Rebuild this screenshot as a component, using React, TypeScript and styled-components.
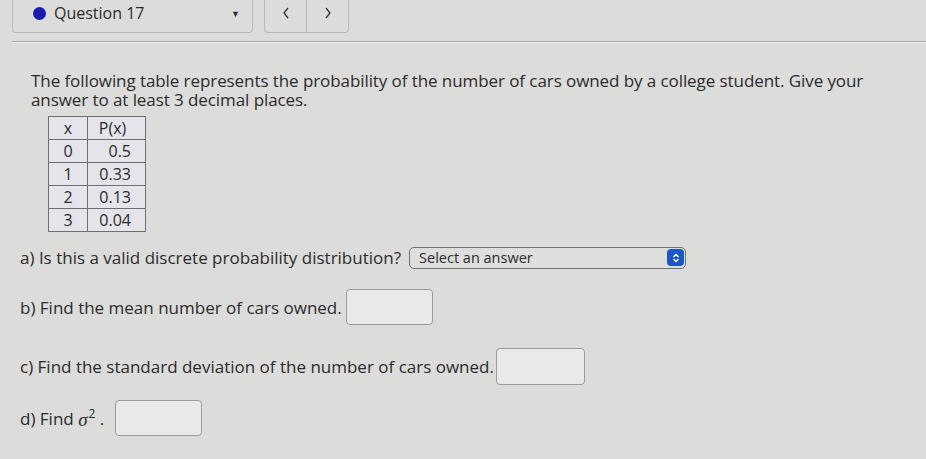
import styled, { createGlobalStyle } from 'styled-components';

const rows = [
  { x: '0', p: '0.5' },
  { x: '1', p: '0.33' },
  { x: '2', p: '0.13' },
  { x: '3', p: '0.04' },
];

const GlobalStyle = createGlobalStyle`
  html, body {
    margin: 0;
    padding: 0;
    background: #dcdcdb;
  }
  body {
    font-family: 'Open Sans', 'Liberation Sans', Arial, sans-serif;
    font-weight: 500;
    color: #2b2b2d;
    width: 926px;
    height: 459px;
    overflow: hidden;
  }
`;

export default function App() {
  return (
    <>
      <GlobalStyle />
      <Page>
        <TopBar>
          <QuestionPicker>
            <Dot />
            <QuestionLabel>Question 17</QuestionLabel>
            <Caret>▼</Caret>
          </QuestionPicker>
          <NavGroup>
            <NavButton>
              <Chevron viewBox="0 0 10 14">
                <path d="M7 2 L3 7 L7 12" />
              </Chevron>
            </NavButton>
            <NavButton>
              <Chevron viewBox="0 0 10 14">
                <path d="M3 2 L7 7 L3 12" />
              </Chevron>
            </NavButton>
          </NavGroup>
        </TopBar>
        <Rule />
        <Content>
          <Intro>
            The following table represents the probability of the number of cars owned by a college student. Give your
            answer to at least 3 decimal places.
          </Intro>
          <Table>
            <thead>
              <tr>
                <Cell>x</Cell>
                <Cell $align="center">P(x)</Cell>
              </tr>
            </thead>
            <tbody>
              {rows.map((r) => (
                <tr key={r.x}>
                  <Cell>{r.x}</Cell>
                  <Cell $align="right">{r.p}</Cell>
                </tr>
              ))}
            </tbody>
          </Table>
          <Part $top={14}>
            a) Is this a valid discrete probability distribution?
            <Select>
              <span>Select an answer</span>
              <SelectIcon>
                <svg width="8" height="10" viewBox="0 0 8 10">
                  <path d="M1.5 4 L4 1.5 L6.5 4" />
                  <path d="M1.5 6 L4 8.5 L6.5 6" />
                </svg>
              </SelectIcon>
            </Select>
          </Part>
          <Part $top={20} $gap={4}>
            b) Find the mean number of cars owned.
            <AnswerBox $width={87} $height={36} />
          </Part>
          <Part $top={23} $gap={2}>
            c) Find the standard deviation of the number of cars owned.
            <AnswerBox $width={89} $height={37} />
          </Part>
          <Part $top={15} $gap={11}>
            <span>
              d) Find <Sigma>σ<sup>2</sup></Sigma> .
            </span>
            <AnswerBox $width={87} $height={36} />
          </Part>
        </Content>
      </Page>
    </>
  );
}

const Page = styled.div`
  display: flex;
  flex-direction: column;
`;

const TopBar = styled.div`
  display: flex;
  gap: 11px;
  padding-left: 12px;
  height: 33px;
`;

const QuestionPicker = styled.div`
  width: 241px;
  display: flex;
  align-items: center;
  border: 1px solid #b9b9b9;
  border-top: none;
  border-radius: 0 0 4px 4px;
  padding: 0 0 6px 20px;
  box-sizing: border-box;
`;

const Dot = styled.span`
  width: 13px;
  height: 13px;
  border-radius: 50%;
  background: #1b1bb0;
  margin-right: 8px;
`;

const QuestionLabel = styled.span`
  font-size: 16px;
  flex: 1;
`;

const Caret = styled.span`
  font-size: 9px;
  color: #333;
  margin-right: 12px;
`;

const NavGroup = styled.div`
  display: flex;
  border: 1px solid #b9b9b9;
  border-top: none;
  border-radius: 0 0 4px 4px;
`;

const NavButton = styled.div`
  width: 41px;
  display: flex;
  align-items: center;
  justify-content: center;
  padding-bottom: 6px;
  & + & {
    border-left: 1px solid #b9b9b9;
  }
`;

const Chevron = styled.svg`
  width: 10px;
  height: 14px;
  fill: none;
  stroke: #333;
  stroke-width: 1.3;
`;

const Rule = styled.div`
  margin: 8px 0 0 12px;
  height: 1px;
  background: #a9a9a9;
  border-bottom: 1px solid #eaeaea;
`;

const Content = styled.div`
  padding: 28px 0 0 20px;
  display: flex;
  flex-direction: column;
  align-items: flex-start;
`;

const Intro = styled.p`
  margin: 0 0 0 11px;
  width: 850px;
  font-size: 17px;
  line-height: 19px;
  letter-spacing: -0.08px;
`;

const Table = styled.table`
  margin: 7px 0 0 28px;
  border-collapse: collapse;
  font-size: 16px;
`;

const Cell = styled.td<{ $align?: 'center' | 'right' }>`
  border: 1.5px solid #6f6f73;
  background: #e4e4ea;
  height: 22px;
  padding: 0 14px 0 6px;
  text-align: ${(p) => p.$align ?? 'center'};
  line-height: 20px;
  &:first-child {
    width: 38px;
    padding: 0;
  }
  &:last-child {
    width: 37px;
  }
`;

const Part = styled.div<{ $top: number; $gap?: number }>`
  margin-top: ${(p) => p.$top}px;
  display: flex;
  align-items: center;
  gap: ${(p) => p.$gap ?? 8}px;
  font-size: 17px;
`;

const Sigma = styled.span`
  font-family: 'Liberation Serif', serif;
  font-style: italic;
  font-size: 19px;
  sup {
    font-family: 'Open Sans', sans-serif;
    font-style: normal;
    font-size: 12px;
    margin-left: 1px;
  }
`;

const Select = styled.div`
  width: 277px;
  height: 22px;
  box-sizing: border-box;
  border: 1.5px solid #737373;
  border-radius: 5px;
  background: #dededd;
  display: flex;
  align-items: center;
  justify-content: space-between;
  padding: 0 1px 0 9px;
  font-size: 14.5px;
`;

const SelectIcon = styled.span`
  width: 17px;
  height: 17px;
  border-radius: 4px;
  background: #1c57c9;
  display: flex;
  align-items: center;
  justify-content: center;
  svg {
    fill: none;
    stroke: #fff;
    stroke-width: 1.5;
  }
`;

const AnswerBox = styled.div<{ $width: number; $height: number }>`
  width: ${(p) => p.$width}px;
  height: ${(p) => p.$height}px;
  box-sizing: border-box;
  border: 1.5px solid #9a9a9a;
  border-radius: 4px;
  background: #e9e9e8;
`;
